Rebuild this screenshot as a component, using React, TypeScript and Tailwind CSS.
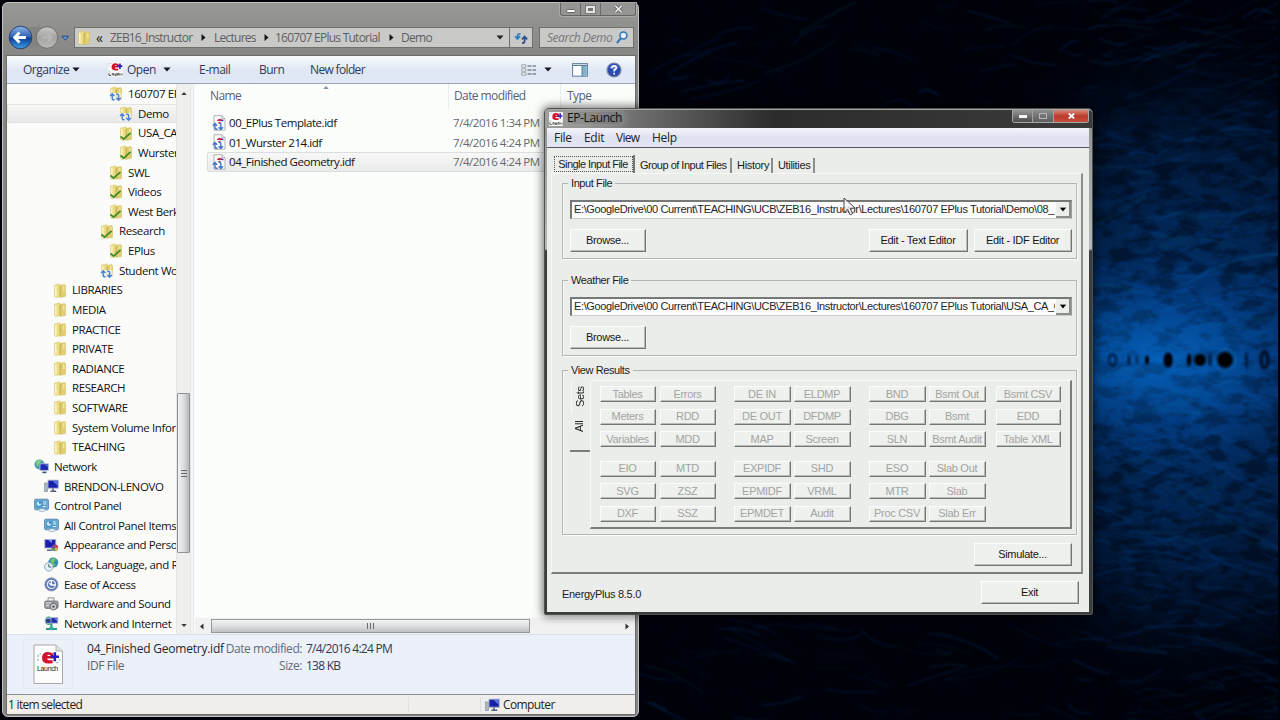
import React from "react";

const UI = "font-['Open_Sans','Noto_Sans',sans-serif]";
const MS = "font-['Liberation_Sans',Arial,sans-serif]";

/* ---------- desktop wallpaper ---------- */

function seeded(seed: number) {
  let s = seed;
  return () => {
    s = (s * 16807) % 2147483647;
    return s / 2147483647;
  };
}

function makeStrands() {
  const r = seeded(77);
  const out: { d: string; c: string; o: number; w: number }[] = [];
  for (let i = 0; i < 520; i++) {
    const right = r() < 0.78;
    const x = right ? 1080 + r() * 210 : 630 + r() * 650;
    const y = right ? r() * 720 : r() < 0.55 ? r() * 105 : 618 + r() * 100;
    const len = 14 + r() * 60;
    const slope = (y < 360 ? -1 : 1) * (r() * 0.9 - 0.35);
    const bend = (r() - 0.5) * 22;
    const near = right ? Math.max(0, 1 - Math.abs(y - 360) / 330) : 0.08;
    out.push({
      d: `M${x.toFixed(1)} ${y.toFixed(1)}q${(len / 2).toFixed(1)} ${((slope * len) / 2 + bend).toFixed(1)} ${len.toFixed(1)} ${(slope * len).toFixed(1)}`,
      c: r() < 0.15 ? "#0d5a66" : "#0b57b8",
      o: 0.09 + near * 0.26 * r() + r() * 0.11,
      w: 0.8 + r() * 1.1,
    });
  }
  return out;
}

const strands = makeStrands();
const solidHoles = [
  [1168, 4.5, 7.5], [1200, 5.8, 6], [1225, 7.7, 7.8], [1147, 2, 4.5], [1189, 2, 6.5],
];
const ringHoles = [
  [1112.5, 3.6, 5.5, 1.8], [1264.5, 3.4, 8, 3.4], [1129, 0.7, 5, 1.2], [1137, 0.6, 4, 0.8],
  [1210, 0.8, 5, 1.3], [1246.5, 0.6, 7.5, 1.5], [1169, 3, 7, 1],
];

function Wallpaper() {
  return (
    <svg className="absolute inset-0" width="1280" height="720" viewBox="0 0 1280 720">
      <defs>
        <radialGradient id="wide" gradientUnits="userSpaceOnUse" cx="0" cy="0" r="1" gradientTransform="translate(1190 362) scale(290 350)">
          <stop offset="0" stopColor="#023a80" />
          <stop offset="0.35" stopColor="#022858" />
          <stop offset="0.7" stopColor="#01122c" />
          <stop offset="1" stopColor="#00020a" stopOpacity="0" />
        </radialGradient>
        <radialGradient id="core" gradientUnits="userSpaceOnUse" cx="0" cy="0" r="1" gradientTransform="translate(1160 360) scale(190 105)">
          <stop offset="0" stopColor="#0560ba" />
          <stop offset="0.35" stopColor="#0450a0" stopOpacity="0.8" />
          <stop offset="0.7" stopColor="#043f86" stopOpacity="0.35" />
          <stop offset="1" stopColor="#04397c" stopOpacity="0" />
        </radialGradient>
        <filter id="grain" x="0" y="0" width="100%" height="100%" colorInterpolationFilters="sRGB">
          <feTurbulence type="fractalNoise" baseFrequency="0.045 0.08" numOctaves="4" seed="8" />
          <feColorMatrix values="0 0 0 0 0  0 0 0 0 0.01  0 0 0 0 0.04  0 0 0 4 -1.7" />
        </filter>
        <filter id="soft" x="-5%" y="-50%" width="110%" height="200%"><feGaussianBlur stdDeviation="0.8" /></filter>
      </defs>
      <rect width="1280" height="720" fill="#00020b" />
      <rect x="640" width="640" height="720" fill="url(#wide)" />
      <rect x="960" y="240" width="320" height="240" fill="url(#core)" />
      <rect x="640" width="640" height="720" filter="url(#grain)" opacity="0.45" />
      <rect x="960" y="240" width="320" height="240" fill="url(#core)" opacity="0.55" />
      <g filter="url(#soft)" fill="none">
        {strands.map((s, i) => (
          <path key={i} d={s.d} stroke={s.c} strokeOpacity={s.o} strokeWidth={s.w} />
        ))}
        <path d="M1185 286q40-30 95-32" stroke="#0c62a8" strokeOpacity=".5" strokeWidth="1.6" />
        <path d="M1165 310q30-10 58-4M1160 410q34 6 58 0" stroke="#1272c4" strokeOpacity=".4" />
        <circle cx="1225" cy="360" r="22" stroke="#1272c4" strokeOpacity=".3" />
        <circle cx="1225" cy="360" r="11" stroke="#2a8ada" strokeOpacity=".4" />
      </g>
      <g filter="url(#soft)">
        {solidHoles.map(([x, rx, ry], i) => (
          <ellipse key={i} cx={x} cy="360" rx={rx} ry={ry} fill="#000106" />
        ))}
        {ringHoles.map(([x, rx, ry, w], i) => (
          <ellipse key={i} cx={x} cy="360" rx={rx} ry={ry} fill="none" stroke="#010e26" strokeWidth={w} />
        ))}
      </g>
      <rect x="1278" width="2" height="720" fill="#00020a" />
    </svg>
  );
}

/* ---------- icons ---------- */

type Mark = "none" | "sync" | "check";

function FolderIcon({ mark = "none" }: { mark?: Mark }) {
  return (
    <svg width="14" height="15" viewBox="0 0 14 15" className="shrink-0">
      <path d="M1.5 2.2 6.5.8l1 1v12l-5 .6-1-.8z" fill="#ecdc85" stroke="#d6c46c" strokeWidth=".5" />
      <path d="M7 2.6 11.6 1.6l.9.8v11l-5.5.9z" fill="#e2ce72" stroke="#cdb85c" strokeWidth=".5" />
      <path d="M2.8 3v10.4" stroke="#fbf3bd" strokeWidth="1.6" />
      <path d="M10.8 3v5" stroke="#f6ecae" strokeWidth="1.2" />
      <path d="M7.2 3v10.5" stroke="#c0a848" strokeWidth=".8" />
      {mark === "check" && <path d="M1.5 10.5 4.6 13.2 11.6 6.8" fill="none" stroke="#3c8a2c" strokeWidth="1.7" />}
      {mark === "sync" && <SyncMark />}
    </svg>
  );
}

function SyncMark() {
  return (
    <g fill="none" stroke="#4a7fd6" strokeWidth="1.4">
      <rect x="0" y="7" width="12.5" height="8" rx="2" fill="#f2f7fd" fillOpacity=".75" stroke="none" />
      <path d="M3.2 8.2v4.2q0 1.6 2.4 1.4M1 10l2.2-2.2L5.4 10" />
      <path d="M9.6 13.8V9.6q0-1.6-2.4-1.4M7.4 12l2.2 2.2L11.8 12" />
    </g>
  );
}

function IdfIcon() {
  return (
    <svg width="14" height="16" viewBox="0 0 14 16" className="shrink-0">
      <path d="M2 .7h7.8L13 3.6v11.6H2z" fill="#fcfcfc" stroke="#a9a9a9" strokeWidth=".9" />
      <path d="M9.8.7v2.9H13" fill="#e0e0e0" stroke="#a9a9a9" strokeWidth=".7" />
      <path d="M5 5.2q2-2.4 4.6-1L8.8 6H5.2z" fill="#d7263b" />
      <path d="M9 4.6h2.4v1.6H9z" fill="#3b33b8" />
      <path d="M8.6 7 6.2 8" stroke="#d7263b" strokeWidth="1.2" />
      <g fill="none" stroke="#3f73cc" strokeWidth="1.4">
        <path d="M3 9v4q0 1.4 2.6 1.2M.8 10.8 3 8.6l2.2 2.2" />
        <path d="M8.8 14V9.6q0-1.4-2-1.2M6.6 12.2l2.2 2.2 2.2-2.2" />
      </g>
    </svg>
  );
}

function EpIcon({ size = 15 }: { size?: number }) {
  return (
    <svg width={size} height={size} viewBox="0 0 15 15" className="shrink-0">
      <rect width="15" height="15" fill="#fafafa" />
      <path d="M1 4.5V1.2h3M1 8.5v1.6h3" stroke="#9c9c9c" fill="none" strokeWidth=".7" strokeDasharray="1.2 1" />
      <path d="M10.6 2Q4.6-.6 3.6 4.6q-.4 5.200 7 3.600L9.800 6.500Q6.800 7.200 6.800 5.400h3.800z" fill="#d3122b" />
      <path d="M6.800 3.800q1.200-1.500 2.200 0z" fill="#fff" />
      <path d="M9.400 4.200h5M12 1.400v5.600" stroke="#2b1fc0" strokeWidth="1.700" />
      <path d="M1 11v2.500h2M4.200 13.500v-2h1.400v2M7 11.300v2.200h1.300v-2.200M9.600 13.500v-2.200h1.200v2.200M12 11.300v2.200M14 11.300v2.200" stroke="#444" fill="none" strokeWidth=".9" />
    </svg>
  );
}

function NetworkIcon() {
  return (
    <svg width="15" height="15" viewBox="0 0 15 15" className="shrink-0">
      <circle cx="5.5" cy="5.5" r="5" fill="#3e9fae" />
      <path d="M2 3q3-3 6-1.4L5 5 3 8z" fill="#8fd07f" />
      <rect x="6" y="4.8" width="8.4" height="6.6" fill="#1d2ab6" stroke="#b5bfd0" strokeWidth=".9" />
      <path d="M10.8 5.4h3v2.6z" fill="#5b77e8" />
      <path d="M8.4 13.4h4" stroke="#3f4c6e" strokeWidth="1.6" />
    </svg>
  );
}

function ComputerIcon() {
  return (
    <svg width="15" height="14" viewBox="0 0 15 14" className="shrink-0">
      <rect x=".6" y="4" width="3" height="8.6" fill="#aeb6c0" stroke="#7e8792" strokeWidth=".6" />
      <rect x="4" y="1.2" width="10.2" height="8" fill="#1920a8" stroke="#a9b3c6" strokeWidth=".9" />
      <path d="M8.4 1.8h5.2v5z" fill="#5a76e0" />
      <path d="M9 9.4v2M6.4 12.2h5.8" stroke="#525d78" strokeWidth="1.5" />
    </svg>
  );
}

function PanelIcon() {
  return (
    <svg width="15" height="15" viewBox="0 0 15 15" className="shrink-0">
      <rect x=".6" y="1.2" width="13.8" height="10.6" rx="1.2" fill="#7fb4d8" stroke="#4c82ab" strokeWidth=".9" />
      <rect x="1.8" y="2.4" width="11.4" height="8" fill="#4f9bcb" />
      <circle cx="5" cy="5.6" r="2.2" fill="#cfe8f5" />
      <path d="M5 5.6V3.4a2.2 2.2 0 0 1 2.2 2.2z" fill="#2b6aa0" />
      <path d="M9 4h3.4M9 6h3.4M8.6 8.6h3.8" stroke="#e6f3fb" strokeWidth="1" />
      <ellipse cx="8" cy="12.2" rx="3.4" ry="1.5" fill="#e6edf2" stroke="#8da3b1" strokeWidth=".6" />
    </svg>
  );
}

function AppearanceIcon() {
  return (
    <svg width="15" height="15" viewBox="0 0 15 15" className="shrink-0">
      <rect x=".8" y="1.4" width="11" height="8.6" fill="#1d1fb0" stroke="#b2b8cc" strokeWidth=".9" />
      <path d="M4 2h4v3z" fill="#7f94f2" />
      <path d="M3 12.2h5" stroke="#5f6678" strokeWidth="1.5" />
      <circle cx="10.8" cy="9.8" r="3.3" fill="#7446a8" />
      <path d="M10.8 9.8V6.5a3.3 3.3 0 0 1 3.2 3.3z" fill="#e03c3c" />
      <path d="M10.8 9.8h3.2a3.3 3.3 0 0 1-3.2 3.3z" fill="#e7b52e" />
      <path d="M10.8 9.8v3.3a3.3 3.3 0 0 1-3.2-3z" fill="#48a24a" />
    </svg>
  );
}

function ClockIcon() {
  return (
    <svg width="15" height="15" viewBox="0 0 15 15" className="shrink-0">
      <circle cx="9.2" cy="5.6" r="5" fill="#2d8fb5" />
      <path d="M6 3q3-3 6-1L9.4 6l2 2-1.6 1.6L7.6 6z" fill="#77c462" />
      <circle cx="4.8" cy="9.8" r="4.2" fill="#e8f0f4" stroke="#86a0ae" strokeWidth=".9" />
      <path d="M4.8 7.2v2.8h2.4" stroke="#46667a" fill="none" strokeWidth="1" />
    </svg>
  );
}

function EaseIcon() {
  return (
    <svg width="15" height="15" viewBox="0 0 15 15" className="shrink-0">
      <circle cx="7.4" cy="7.4" r="6.6" fill="#5a76b9" stroke="#97a3bb" strokeWidth="1" />
      <circle cx="7.4" cy="7.4" r="4.1" fill="none" stroke="#e9effa" strokeWidth="1.2" />
      <path d="M7.4 3v5h4M5 6.2 7.4 8" stroke="#fff" fill="none" strokeWidth="1.3" />
    </svg>
  );
}

function HardwareIcon() {
  return (
    <svg width="15" height="15" viewBox="0 0 15 15" className="shrink-0">
      <path d="M4 4V.8h6V4" fill="#f0f0f0" stroke="#838383" strokeWidth=".8" />
      <rect x=".7" y="4" width="13.4" height="7.4" rx="1.4" fill="#9a9ea2" stroke="#6c7074" strokeWidth=".8" />
      <path d="M2 6h5M2 8.6h3" stroke="#e4e4e4" strokeWidth="1" />
      <circle cx="9.4" cy="9.6" r="3.4" fill="#caced1" stroke="#5c6165" strokeWidth=".9" />
      <circle cx="9.4" cy="9.6" r="1.2" fill="#4c5155" />
    </svg>
  );
}

function InternetIcon() {
  return (
    <svg width="15" height="15" viewBox="0 0 15 15" className="shrink-0">
      <circle cx="4.8" cy="4.8" r="4.2" fill="#4aa892" />
      <rect x="1.6" y="2.4" width="6" height="4.8" fill="#28418f" stroke="#c4ccd8" strokeWidth=".7" />
      <rect x="7" y="1.6" width="6.8" height="5.6" fill="#2333ae" stroke="#b5bfd0" strokeWidth=".8" />
      <path d="M10 2.2h3.2v2.8z" fill="#6d86ea" />
      <path d="M7.4 7.6v4M2 13h11" stroke="#2a9d78" strokeWidth="2" />
      <rect x="5.4" y="10.8" width="4" height="3.4" fill="#3ba7b0" />
    </svg>
  );
}

function Caret({ className = "" }: { className?: string }) {
  return (
    <svg width="8" height="5" viewBox="0 0 8 5" className={"shrink-0 " + className}>
      <path d="M.4.4h7.2L4 4.6z" fill="currentColor" />
    </svg>
  );
}

function Crumb() {
  return (
    <svg width="5" height="7" viewBox="0 0 5 7" className="shrink-0">
      <path d="M.5 0v7L4.6 3.5z" fill="#16161a" />
    </svg>
  );
}

/* ---------- explorer window ---------- */

type NavRow = { t: string; pad: string; icon: React.ReactNode; sel?: boolean };

const L1 = "pl-[27px]";
const L2 = "pl-[37px]";
const L3 = "pl-[46px]";
const L5 = "pl-[93px]";
const L6 = "pl-[102px]";
const L7 = "pl-[112px]";

const nav: NavRow[] = [
  { t: "160707 EPlus Tutorial", pad: L6, icon: <FolderIcon mark="sync" /> },
  { t: "Demo", pad: "pl-[111px]", icon: <FolderIcon mark="sync" />, sel: true },
  { t: "USA_CA_Oakland", pad: L7, icon: <FolderIcon mark="check" /> },
  { t: "Wurster Hall", pad: L7, icon: <FolderIcon mark="check" /> },
  { t: "SWL", pad: L6, icon: <FolderIcon mark="check" /> },
  { t: "Videos", pad: L6, icon: <FolderIcon mark="check" /> },
  { t: "West Berkeley", pad: L6, icon: <FolderIcon mark="check" /> },
  { t: "Research", pad: L5, icon: <FolderIcon mark="check" /> },
  { t: "EPlus", pad: L6, icon: <FolderIcon mark="check" /> },
  { t: "Student Work", pad: L5, icon: <FolderIcon mark="sync" /> },
  { t: "LIBRARIES", pad: L3, icon: <FolderIcon /> },
  { t: "MEDIA", pad: L3, icon: <FolderIcon /> },
  { t: "PRACTICE", pad: L3, icon: <FolderIcon /> },
  { t: "PRIVATE", pad: L3, icon: <FolderIcon /> },
  { t: "RADIANCE", pad: L3, icon: <FolderIcon /> },
  { t: "RESEARCH", pad: L3, icon: <FolderIcon /> },
  { t: "SOFTWARE", pad: L3, icon: <FolderIcon /> },
  { t: "System Volume Information", pad: L3, icon: <FolderIcon /> },
  { t: "TEACHING", pad: L3, icon: <FolderIcon /> },
  { t: "Network", pad: L1, icon: <NetworkIcon /> },
  { t: "BRENDON-LENOVO", pad: L2, icon: <ComputerIcon /> },
  { t: "Control Panel", pad: L1, icon: <PanelIcon /> },
  { t: "All Control Panel Items", pad: L2, icon: <PanelIcon /> },
  { t: "Appearance and Personalization", pad: L2, icon: <AppearanceIcon /> },
  { t: "Clock, Language, and Region", pad: L2, icon: <ClockIcon /> },
  { t: "Ease of Access", pad: L2, icon: <EaseIcon /> },
  { t: "Hardware and Sound", pad: L2, icon: <HardwareIcon /> },
  { t: "Network and Internet", pad: L2, icon: <InternetIcon /> },
];

function ExplorerTitle() {
  return (
    <div className="flex h-[23px] shrink-0 justify-end">
      <div className="flex h-[13px] overflow-hidden rounded-b-[3px] border border-t-0 border-[#646462] bg-[#959593] shadow-[0_0_0_1px_#a9a9a7]">
        <div className="flex w-[20px] items-center justify-center border-r border-[#6b6b69]">
          <div className="mt-1 h-[4px] w-[10px] rounded-sm border border-[#6a6a6a] bg-white" />
        </div>
        <div className="flex w-[20px] items-center justify-center border-r border-[#6b6b69]">
          <div className="h-[7px] w-[9px] border-2 border-[#e4e4e4] bg-[#777] outline outline-[#7a7a7a]" />
        </div>
        <div className="flex w-[34px] items-center justify-center">
          <svg width="9" height="8" viewBox="0 0 9 8">
            <path d="M1.3.8 7.7 7.2M7.7.8 1.3 7.2" stroke="#6a6a6a" strokeWidth="3.4" />
            <path d="M1.3.8 7.7 7.2M7.7.8 1.3 7.2" stroke="#ececec" strokeWidth="1.6" />
          </svg>
        </div>
      </div>
    </div>
  );
}

function AddressRow() {
  return (
    <div className="flex h-[29px] shrink-0 items-start text-[12px] text-[#5e5e60]">
      <svg width="64" height="25" viewBox="0 0 64 25" className="-mt-px shrink-0">
        <defs>
          <linearGradient id="back" x1="0" y1="0" x2="0" y2="1">
            <stop offset="0" stopColor="#8db4e6" />
            <stop offset=".48" stopColor="#2c5fb4" />
            <stop offset=".52" stopColor="#0c3c96" />
            <stop offset="1" stopColor="#3fa0e8" />
          </linearGradient>
          <linearGradient id="fwd" x1="0" y1="0" x2="0" y2="1">
            <stop offset="0" stopColor="#c8c8c6" />
            <stop offset=".5" stopColor="#a4a4a2" />
            <stop offset="1" stopColor="#bcbcba" />
          </linearGradient>
        </defs>
        <rect x="12" y="2" width="38" height="20" rx="9" fill="#838381" />
        <circle cx="14.5" cy="12.5" r="11.3" fill="url(#back)" stroke="#27406e" strokeWidth="1" />
        <path d="M8.9 12.5h11M13.5 7.6 8.7 12.5 13.5 17.4" fill="none" stroke="#fff" strokeWidth="2.8" />
        <circle cx="41" cy="12.5" r="10.8" fill="url(#fwd)" stroke="#6e6e6c" strokeWidth="1" />
        <path d="M36 12.5h9M42 9l3.5 3.5L42 16" fill="none" stroke="#b8b8b6" strokeWidth="2" />
        <path d="M56 11.2h6.6l-3.3 4z" fill="#6f9fd2" stroke="#1e4a86" strokeWidth="1" />
      </svg>
      <div className="mt-px ml-[4px] flex h-[21px] w-[436px] shrink-0 items-center border border-[#70706e] bg-[#c9c9c8]">
        <div className="ml-[2px]"><FolderIcon /></div>
        <span className="ml-[5px] w-[12px] text-[14px] leading-none tracking-[-1px] text-[#222]">«</span>
        <span className="ml-[2px] w-[83px] tracking-[-0.82px]">ZEB16_Instructor</span>
        <span className="ml-[8px] flex"><Crumb /></span>
        <span className="ml-[8px] w-[41px] tracking-[-0.75px]">Lectures</span>
        <span className="ml-[9px] flex"><Crumb /></span>
        <span className="ml-[6px] w-[105px] tracking-[-0.75px] whitespace-nowrap">160707 EPlus Tutorial</span>
        <span className="ml-[9px] flex"><Crumb /></span>
        <span className="ml-[7px] tracking-[-0.7px]">Demo</span>
        <Caret className="mr-[5px] ml-auto text-[#222]" />
      </div>
      <div className="mt-px flex h-[21px] w-[23px] shrink-0 items-center justify-center border border-l-0 border-[#70706e] bg-[#c9c9c8]">
        <svg width="14" height="13" viewBox="0 0 14 13">
          <path d="M3.5 7.5V5q0-2.4 3-2.2M1 5.2 3.5 8l2.6-2.8" fill="none" stroke="#2d7fc0" strokeWidth="1.7" />
          <path d="M10.6 6v4q0 2.2-2.6 2.2M8 8.4l2.6-2.8 2.6 2.8" fill="none" stroke="#2a4f8e" strokeWidth="1.7" />
        </svg>
      </div>
      <div className="mt-px ml-[6px] flex h-[21px] w-[95px] shrink-0 items-center justify-between border border-[#70706e] bg-[#c9c9c8] pr-[5px] pl-[7px]">
        <span className="whitespace-nowrap tracking-[-0.45px] text-[#77777a] italic">Search Demo</span>
        <svg width="12" height="13" viewBox="0 0 12 13">
          <circle cx="7.4" cy="4.6" r="3.5" fill="#e4f0fa" stroke="#2f72b8" strokeWidth="1.5" />
          <path d="M5 7.2.9 12" stroke="#2f72b8" strokeWidth="2" />
        </svg>
      </div>
    </div>
  );
}

function Toolbar() {
  return (
    <div className="flex h-[28px] shrink-0 items-center border-t border-b border-t-[#f9fbfd] border-b-[#9ba3b4] bg-linear-to-b from-[#f7fafd] via-[#dfe7f4] via-[52%] to-[#e0e9f5] pb-[1px] text-[12px] tracking-[-0.5px] text-[#2f3b57]">
      <span className="ml-[16px] w-[46px] whitespace-nowrap">Organize</span>
      <Caret className="ml-[3px] text-[#16161a]" />
      <span className="ml-[28px] flex"><EpIcon size={15} /></span>
      <span className="ml-[4px] w-[28px]">Open</span>
      <Caret className="ml-[8px] text-[#16161a]" />
      <span className="ml-[28px] w-[32px] whitespace-nowrap">E-mail</span>
      <span className="ml-[28px] w-[24px]">Burn</span>
      <span className="ml-[27px] w-[56px] whitespace-nowrap tracking-[-0.65px]">New folder</span>
      <svg width="16" height="12" viewBox="0 0 16 12" className="ml-[155px]">
        <path d="M.8.8h4v2.4h-4zM.8 4.8h4v2.4h-4zM.8 8.8h4v2.4h-4z" fill="#fff" stroke="#8e959e" strokeWidth=".9" />
        <path d="M6.5 2h4M11.5 2h3.5M6.5 6h4M11.5 6h3.5M6.5 10h4M11.5 10h3.5" stroke="#7d8796" strokeWidth="1.3" />
      </svg>
      <Caret className="ml-[7px] text-[#16161a]" />
      <svg width="16" height="14" viewBox="0 0 16 14" className="ml-[20px]">
        <rect x=".6" y=".6" width="14.8" height="12.6" fill="#fcfeff" stroke="#5f7d9c" />
        <path d="M.6 2.4h14.8" stroke="#5f7d9c" strokeWidth="1.2" />
        <rect x="10" y="3" width="4.8" height="9.8" fill="#7fb2c8" />
        <path d="M10 2.4v10.8" stroke="#5f7d9c" />
      </svg>
      <svg width="16" height="16" viewBox="0 0 16 16" className="ml-[18px]">
        <circle cx="8" cy="8" r="7" fill="#2b4bb0" stroke="#7d8aa8" strokeWidth="1.2" />
        <path d="M3 5.5Q8 1 13 5.5 8 8 3 5.5z" fill="#7f97dd" fillOpacity=".7" />
        <path d="M5.8 6.2q.2-2.4 2.4-2.3 2.3.1 2.1 2.1-.2 1.3-2.1 2.1v1.4M8.2 10.8v1.7" stroke="#fff" strokeWidth="1.7" fill="none" />
      </svg>
    </div>
  );
}

function NavPane() {
  return (
    <div className="flex w-[188px] shrink-0 bg-[#fbfcfa]">
      <div className="w-[169px] overflow-hidden">
        {nav.map((n) => (
          <div
            key={n.t}
            className={
              "flex h-[19.63px] items-center " + n.pad +
              (n.sel ? " rounded-l-[2px] border border-r-0 border-[#e2e3e2] bg-linear-to-b from-[#f7f7f6] to-[#e6e7e6]" : "")
            }
          >
            {n.icon}
            <span className="ml-[5px] whitespace-nowrap text-[11.5px] leading-none tracking-[-0.4px] text-[#111114]">{n.t}</span>
          </div>
        ))}
      </div>
      <div className="flex w-[15px] flex-col items-center border-x border-[#e6e6e6] bg-[#efefee]">
        <Caret className="mt-[7px] scale-75 rotate-180 text-[#3a3a3a]" />
        <div className="mt-[297px] flex h-[160px] w-[13px] flex-col items-center justify-center gap-[2px] rounded-[1px] border border-[#8f9195] bg-linear-to-r from-[#f1f2f3] via-[#dcdee1] to-[#b4b8bd]">
          <div className="h-px w-[6px] bg-[#66696e]" />
          <div className="h-px w-[6px] bg-[#66696e]" />
          <div className="h-px w-[6px] bg-[#66696e]" />
        </div>
        <Caret className="mt-auto mb-[6px] scale-75 text-[#3a3a3a]" />
      </div>
      <div className="w-[2px] bg-[#f4f5f5]" />
      <div className="w-px bg-[#e6e9ee]" />
    </div>
  );
}

const files = [
  ["00_EPlus Template.idf", "7/4/2016 1:34 PM"],
  ["01_Wurster 214.idf", "7/4/2016 4:24 PM"],
  ["04_Finished Geometry.idf", "7/4/2016 4:24 PM"],
];

function FilePane() {
  return (
    <div className="flex min-w-0 grow flex-col bg-[#fbfdfa] text-[11.5px] tracking-[-0.45px]">
      <div className="relative flex h-[24px] shrink-0 items-center text-[12px] text-[#5a6172]">
        <Caret className="absolute top-[1px] left-[127px] scale-75 rotate-180 text-[#7d93a8]" />
        <span className="w-[253px] shrink-0 pl-[15px] tracking-[-0.6px]">Name</span>
        <span className="h-full w-px shrink-0 bg-[#e9edf2]" />
        <span className="w-[111px] shrink-0 pl-[5px] tracking-[-0.6px] whitespace-nowrap">Date modified</span>
        <span className="h-full w-px shrink-0 bg-[#e9edf2]" />
        <span className="pl-[6px] tracking-[-0.6px]">Type</span>
      </div>
      <div className="mt-[5px]">
        {files.map(([n, d], i) => (
          <div
            key={n}
            className={
              "ml-[12px] flex h-[19.6px] items-center border " +
              (i === 2 ? "rounded-[2px] border-[#dcdddd] bg-linear-to-b from-[#f8f8f8] to-[#e9eaea]" : "border-transparent")
            }
          >
            <span className="ml-[4px] flex"><IdfIcon /></span>
            <span className="ml-[3px] w-[224px] shrink-0 whitespace-nowrap text-[#111114]">{n}</span>
            <span className="whitespace-nowrap text-[#66686d]">{d}</span>
          </div>
        ))}
      </div>
      <div className="mt-auto flex h-[16px] items-center bg-[#f0f1f0]">
        <svg width="5" height="7" viewBox="0 0 5 7" className="ml-[4px]"><path d="M4.5.5v6L1 3.5z" fill="#333" /></svg>
        <div className="ml-[7px] flex h-[14px] w-[319px] items-center justify-center gap-[2px] border border-[#96999c] bg-linear-to-b from-[#f3f4f4] via-[#dcdedf] to-[#bfc2c4]">
          <div className="h-[6px] w-px bg-[#66696e]" />
          <div className="h-[6px] w-px bg-[#66696e]" />
          <div className="h-[6px] w-px bg-[#66696e]" />
        </div>
        <svg width="5" height="7" viewBox="0 0 5 7" className="mr-[5px] ml-auto"><path d="M.5.5v6L4 3.500z" fill="#333" /></svg>
      </div>
    </div>
  );
}

function DetailsPane() {
  return (
    <div className="flex h-[60px] shrink-0 border-t border-[#dbe0ea] bg-[#ecf0f9] text-[12px] leading-[17px] tracking-[-0.22px]">
      <div className="mt-[4px] ml-[16px] flex h-[50px] w-[50px] items-center justify-center border border-[#e5eaf4]">
        <svg width="32" height="41" viewBox="0 0 32 41">
          <path d="M2 1h22l6.500 6v32.500H2z" fill="#fdfdfd" stroke="#a8a8a8" />
          <path d="M24 1v6h6.500" fill="#e2e2e2" stroke="#b0b0b0" />
          <path d="M6 17v-5q0-2 3-2.500M24 19q3-.5 3.500-4" fill="none" stroke="#8fb8c8" strokeWidth="1.2" strokeDasharray="2.5 1.5" />
          <path d="M21 9.500Q11.500 5.500 10 13q-.5 8.500 11 6l-.8-3q-5 1.200-5-1.600h6z" fill="#d4142c" />
          <path d="M15 12q2-2.300 3.800 0z" fill="#fff" />
          <path d="M18.500 12.800h8.500M22.800 8.200v9" stroke="#241bc4" strokeWidth="2.600" />
          <text x="5" y="26.500" fontSize="7" fontFamily="Liberation Sans" fill="#222" textLength="21">Launch</text>
        </svg>
      </div>
      <div className="mt-[5px] ml-[14px] w-[137px] shrink-0 whitespace-nowrap">
        <div className="text-[#26282e]">04_Finished Geometry.idf</div>
        <div className="tracking-[-0.4px] text-[#61656e]">IDF File</div>
      </div>
      <div className="mt-[5px] w-[78px] shrink-0 text-right tracking-[-0.45px] whitespace-nowrap text-[#5f6c80]">
        <div>Date modified:</div>
        <div>Size:</div>
      </div>
      <div className="mt-[5px] ml-[4px] tracking-[-0.75px] whitespace-nowrap text-[#2f3a50]">
        <div>7/4/2016 4:24 PM</div>
        <div>138 KB</div>
      </div>
    </div>
  );
}

function Explorer() {
  return (
    <div className={"absolute top-[2px] left-[2px] flex h-[715px] w-[637px] flex-col rounded-[6px] border border-[#c3c3c1] bg-[#8b8b89] bg-linear-to-b from-[#979795] to-[#868684] to-[54px] pr-[2px] pb-[1px] pl-[3px] leading-none " + UI}>
      <ExplorerTitle />
      <AddressRow />
      <div className="flex min-h-0 grow flex-col overflow-hidden border border-[#6b6b69] bg-white">
        <Toolbar />
        <div className="flex min-h-0 grow">
          <NavPane />
          <FilePane />
        </div>
        <DetailsPane />
        <div className="flex h-[20px] shrink-0 items-center border-t border-[#8d9097] bg-[#f0eeec] text-[12px] tracking-[-0.6px] text-[#1f1f22]">
          <span className="ml-[1px] tracking-[-0.7px]">1 item selected</span>
          <span className="ml-auto h-[16px] w-[73px] border-x border-[#e2e0de]" />
          <span className="ml-[4px] flex"><ComputerIcon /></span>
          <span className="ml-[3px] w-[132px]">Computer</span>
        </div>
      </div>
    </div>
  );
}

/* ---------- EP-Launch window ---------- */

const raised =
  "flex items-center justify-center border border-t-[#fbfcfb] border-l-[#fbfcfb] border-r-[#747674] border-b-[#747674] bg-[#eff1ee] shadow-[inset_-1px_-1px_0_#b9bbb8] whitespace-nowrap";

function Button({ children, className }: { children: React.ReactNode; className: string }) {
  return <div className={raised + " h-[23px] pr-px text-[#161616] " + className}>{children}</div>;
}

function Combo({ text }: { text: string }) {
  return (
    <div className="flex h-[19px] w-[502px] border-t-2 border-l-2 border-r border-b border-t-[#767876] border-l-[#767876] border-r-[#9c9e9c] border-b-[#c9cbc9] bg-[#fbfcfb]">
      <div className="flex w-[483px] items-center overflow-hidden pb-[2px] pl-[2px] text-[11px] tracking-[-0.36px] whitespace-nowrap text-[#262626]">{text}</div>
      <div className="ml-auto flex w-[15px] items-center justify-center border-r-2 border-b-2 border-[#8a8c8a] bg-[#eceeeb]">
        <Caret className="scale-90 text-black" />
      </div>
    </div>
  );
}

function Group({ title, className, children }: { title: string; className: string; children: React.ReactNode }) {
  return (
    <fieldset className={"w-[515px] border border-[#b3b5b2] shadow-[inset_1px_0_0_#fafbfa,1px_1px_0_#fafbfa] " + className}>
      <legend className="ml-[5px] h-[12px] px-[3px] leading-[12px] tracking-[-0.4px]">{title}</legend>
      {children}
    </fieldset>
  );
}

const results: (string | null)[][] = [
  ["Tables", "Errors", "DE IN", "ELDMP", "BND", "Bsmt Out", "Bsmt CSV"],
  ["Meters", "RDD", "DE OUT", "DFDMP", "DBG", "Bsmt", "EDD"],
  ["Variables", "MDD", "MAP", "Screen", "SLN", "Bsmt Audit", "Table XML"],
  ["EIO", "MTD", "EXPIDF", "SHD", "ESO", "Slab Out", null],
  ["SVG", "ZSZ", "EPMIDF", "VRML", "MTR", "Slab", null],
  ["DXF", "SSZ", "EPMDET", "Audit", "Proc CSV", "Slab Err", null],
];

const colClass = [
  "w-[56px]",
  "ml-[4px] w-[56px]",
  "ml-[18px] w-[57px]",
  "ml-[3px] w-[57px]",
  "ml-[18px] w-[57px]",
  "ml-[3px] w-[57px]",
  "ml-[10px] w-[65px]",
];
const rowClass = ["", "mt-[6.5px]", "mt-[6.5px]", "mt-[13.5px]", "mt-[6.5px]", "mt-[6.5px]"];

function Launch() {
  return (
    <div className="absolute top-[108px] left-[544px] flex h-[507px] w-[549px] flex-col rounded-t-[5px] rounded-b-[2px] border border-[#4f514f] bg-[#7b7d7b] bg-linear-to-b from-[#8f918f] via-[#b4b8b6] via-[140px] to-[#3c3e3d] to-[142px] pr-[3px] pb-[2px] pl-[2px] leading-none shadow-[0_0_8px_2px_rgba(0,0,0,0.5)]">
      <div className={"-mr-[3px] -ml-[2px] flex h-[19px] shrink-0 items-center rounded-t-[4px] border-t border-[#a5a7a5] bg-linear-to-r from-[#9fa19f] via-[#2c2c2c] via-[42%] to-[#3b3b3b] pl-[4px] text-[12px] tracking-[-0.4px] text-[#111] " + UI}>
        <EpIcon size={14} />
        <span className="mb-[2px] ml-[4px] rounded-full shadow-[0_0_8px_4px_rgba(200,200,200,0.25)]">EP-Launch</span>
        <div className="mr-[3px] mb-[5px] ml-auto flex h-[13px] overflow-hidden rounded-b-[3px] border border-t-0 border-[#a7a9a7]">
          <div className="flex w-[20px] items-end justify-center border-r border-[#a0a0a0] bg-linear-to-b from-[#979797] to-[#4c4c4c] pb-[4px]">
            <div className="h-[3px] w-[8px] bg-[#f5f5f5]" />
          </div>
          <div className="flex w-[21px] items-center justify-center border-r border-[#a0a0a0] bg-linear-to-b from-[#8c8c8c] to-[#5c5c5c]">
            <div className="h-[6px] w-[8px] border border-[#b6b6b6]" />
          </div>
          <div className="flex w-[34px] items-center justify-center bg-linear-to-b from-[#d8887c] via-[#bd3a2a] via-[50%] to-[#c44c38]">
            <svg width="7" height="6" viewBox="0 0 7 6"><path d="M.8.5 6.2 5.500M6.200.5.8 5.500" stroke="#fff" strokeWidth="1.8" /></svg>
          </div>
        </div>
      </div>
      <div className={"flex h-[20px] shrink-0 items-center border-b border-[#55575f] bg-linear-to-b from-[#f4f5fb] via-[#dfe1f1] to-[#e3e5f3] text-[12px] tracking-[-0.3px] text-[#23232b] " + UI}>
        <span className="ml-[7px] w-[30px]">File</span>
        <span className="w-[32px]">Edit</span>
        <span className="w-[36px] tracking-[-0.7px]">View</span>
        <span>Help</span>
      </div>
      <div className={"flex min-h-0 grow flex-col bg-[#ebedea] text-[11px] tracking-[-0.3px] text-[#1c1c1c] " + MS}>
        <div className="mt-[7px] ml-[6px] flex h-[18px] shrink-0 items-end tracking-[-0.5px]">
          <div className="flex h-[18px] w-[82px] items-center justify-center border-r-2 border-[#757775]">
            <span className="flex h-[16px] w-[79px] items-center justify-center border border-dotted border-[#555] pt-px whitespace-nowrap tracking-[-0.55px]">Single Input File</span>
          </div>
          <div className="flex h-[15px] w-[97px] items-center border-r-2 border-[#8b8d8b] pl-[5px] whitespace-nowrap">Group of Input Files</div>
          <div className="flex h-[15px] w-[41px] items-center border-r-2 border-[#8b8d8b] pl-[5px] tracking-[-0.3px] whitespace-nowrap">History</div>
          <div className="flex h-[15px] w-[42px] items-center border-r-2 border-[#8b8d8b] pl-[5px] tracking-[-0.35px] whitespace-nowrap">Utilities</div>
        </div>
        <div className="ml-[4px] flex h-[401px] w-[532px] shrink-0 flex-col border-t border-l border-r-2 border-b-2 border-t-[#f5f6f5] border-l-[#f5f6f5] border-r-[#8b8d8b] border-b-[#7b7d7b] pl-[10px]">
          <Group title="Input File" className="mt-[3px] h-[82px]">
            <div className="pt-[11px] pl-[7px]">
              <Combo text={"E:\\GoogleDrive\\00 Current\\TEACHING\\UCB\\ZEB16_Instructor\\Lectures\\160707 EPlus Tutorial\\Demo\\08_"} />
              <div className="mt-[10px] flex">
                <Button className="w-[76px]">Browse...</Button>
                <Button className="ml-[223px] w-[99px]">Edit - Text Editor</Button>
                <Button className="ml-[6px] w-[98px]">Edit - IDF Editor</Button>
              </div>
            </div>
          </Group>
          <Group title="Weather File" className="mt-[15px] h-[82px]">
            <div className="pt-[11px] pl-[7px]">
              <Combo text={"E:\\GoogleDrive\\00 Current\\TEACHING\\UCB\\ZEB16_Instructor\\Lectures\\160707 EPlus Tutorial\\USA_CA_Oak"} />
              <div className="mt-[10px] flex">
                <Button className="w-[76px]">Browse...</Button>
              </div>
            </div>
          </Group>
          <Group title="View Results" className="mt-[8px] h-[171px]">
            <div className="flex pt-[4px] pl-[7px]">
              <div className="flex w-[20px] flex-col items-center">
                <div className="flex h-[34px] w-[18px] rotate-180 items-center justify-center border-r border-[#f8f9f8] text-[11px] [writing-mode:vertical-rl]">Sets</div>
                <div className="flex h-[38px] w-[20px] rotate-180 items-center justify-center border-t-2 border-[#7b7d7b] pb-[12px] pl-[2px] text-[11px] [writing-mode:vertical-rl]">
                  <span className="mt-[24px]">All</span>
                </div>
              </div>
              <div className="h-[149px] w-[482px] border-t border-l border-r-2 border-b-2 border-t-[#f8f9f8] border-l-[#f8f9f8] border-r-[#7b7d7b] border-b-[#7b7d7b] pt-[5px] pl-[9px] text-[#a2a4a2]">
                {results.map((row, r) => (
                  <div key={r} className={"flex " + rowClass[r]}>
                    {row.map((c, i) =>
                      c ? <div key={c} className={raised + " h-[16px] pr-px " + colClass[i]}>{c}</div> : null
                    )}
                  </div>
                ))}
              </div>
            </div>
          </Group>
          <div className="mt-[8px] flex justify-end pr-[9px]">
            <Button className="w-[98px]">Simulate...</Button>
          </div>
        </div>
        <div className="flex grow items-center pr-[10px] pb-[1px] pl-[15px]">
          <span className="mt-[4px] grow tracking-[-0.3px]">EnergyPlus 8.5.0</span>
          <Button className="w-[98px]">Exit</Button>
        </div>
      </div>
    </div>
  );
}

export default function App() {
  return (
    <div className="relative h-[720px] w-[1280px] overflow-hidden bg-black">
      <Wallpaper />
      <Explorer />
      <Launch />
      <svg width="14" height="20" viewBox="0 0 14 20" className="absolute top-[197px] left-[843px]">
        <path d="M1 1v14.5l3.5-3.2 2.6 5.6 2.6-1.2-2.5-5.3 5-.3z" fill="#f4f5f4" fillOpacity=".85" stroke="#4a4a4a" strokeWidth="1" />
      </svg>
    </div>
  );
}
